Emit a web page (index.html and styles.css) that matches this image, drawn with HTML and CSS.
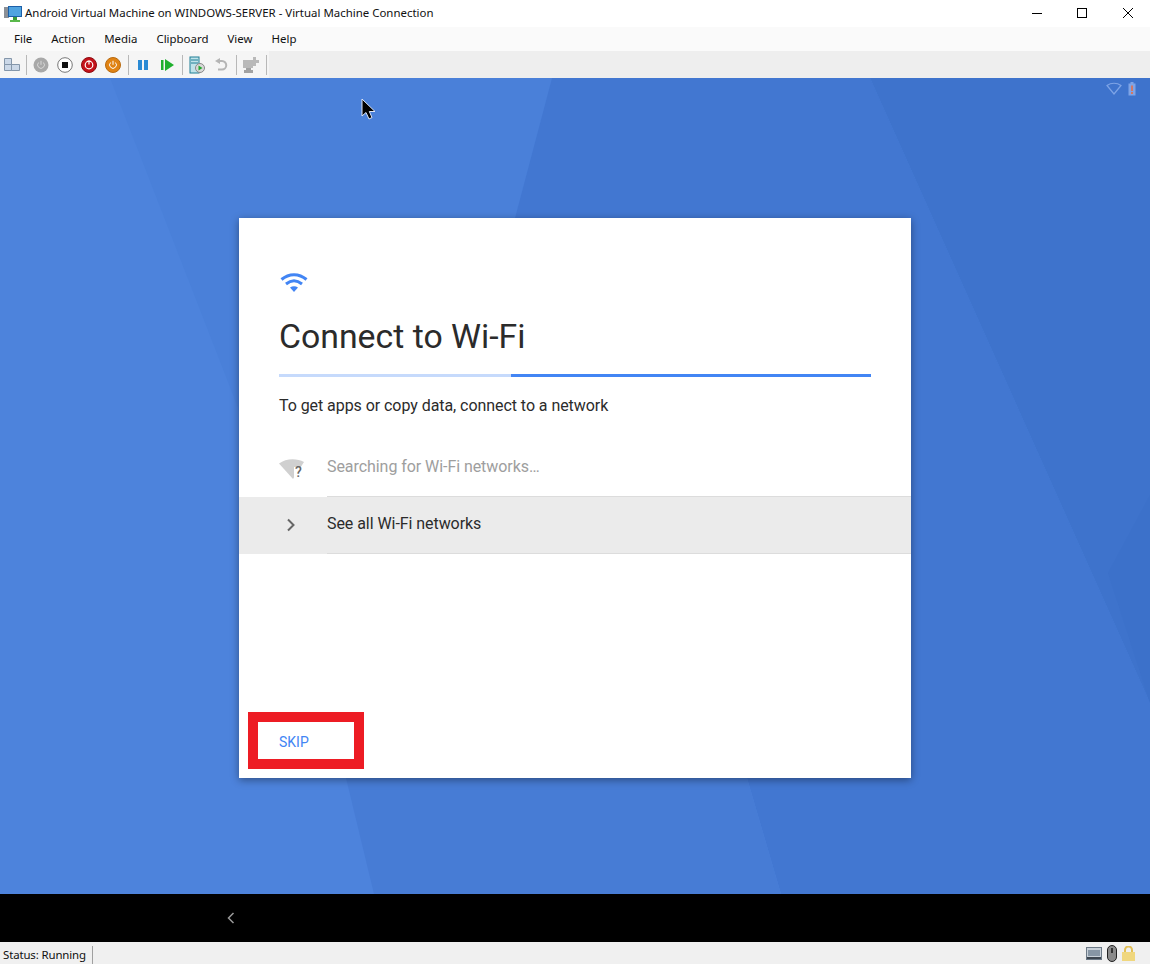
FILE: index.html
```html
<!DOCTYPE html>
<html lang="en">
<head>
<meta charset="utf-8">
<title>Android Virtual Machine on WINDOWS-SERVER - Virtual Machine Connection</title>
<link rel="stylesheet" href="styles.css">
</head>
<body>
<div class="window">
  <header class="titlebar">
    <svg class="app-icon" width="18" height="18" viewBox="0 0 18 18">
      <rect x="0" y="2" width="5" height="11" fill="#8a8f96"/>
      <rect x="4" y="1" width="14" height="11" fill="#1c5fa8"/>
      <rect x="5" y="2" width="12" height="9" fill="#4fa3e0"/>
      <rect x="9" y="12" width="4" height="3" fill="#3a9a3a"/>
      <rect x="6" y="15" width="10" height="2" fill="#59b84a"/>
    </svg>
    <span class="title">Android Virtual Machine on WINDOWS-SERVER - Virtual Machine Connection</span>
    <div class="win-controls">
      <svg width="46" height="27" viewBox="0 0 46 27"><path d="M20 13.500h10" stroke="#000" fill="none"/></svg>
      <svg width="46" height="27" viewBox="0 0 46 27"><rect x="19.500" y="8.500" width="9" height="9" stroke="#000" fill="none"/></svg>
      <svg width="46" height="27" viewBox="0 0 46 27"><path d="M19 8l10 10M29 8l-10 10" stroke="#000" fill="none"/></svg>
    </div>
  </header>
  <nav class="menubar">
    <span>File</span><span>Action</span><span>Media</span><span>Clipboard</span><span>View</span><span>Help</span>
  </nav>
  <div class="toolbar">
    <div class="tools">
      <span class="tool tool-first"><svg width="16" height="13" viewBox="0 0 16 13"><path d="M.5 .5h7v6h-7zM.5 6.500h7v6h-7zM7.500 6.500h8v6h-8z" fill="#cbd8e8" stroke="#8496aa"/></svg></span>
      <i class="sep"></i>
      <span class="tool"><svg width="16" height="16" viewBox="0 0 16 16"><circle cx="8" cy="8" r="7.500" fill="#a8a8a8"/><path d="M5.600 5.500a3.400 3.400 0 1 0 4.800 0M8 3.800v4" stroke="#d8d8d8" fill="none"/></svg></span>
      <span class="tool"><svg width="16" height="16" viewBox="0 0 16 16"><circle cx="8" cy="8" r="7.300" fill="#fff" stroke="#777"/><rect x="5" y="5" width="6" height="6" fill="#111"/></svg></span>
      <span class="tool"><svg width="16" height="16" viewBox="0 0 16 16"><circle cx="8" cy="8" r="7.500" fill="#c4121a" stroke="#8e0d12"/><circle cx="8" cy="8" r="3.800" fill="none" stroke="#fff" stroke-width="1.200"/><path d="M8 3.500v4" stroke="#fff" stroke-width="1.200"/></svg></span>
      <span class="tool"><svg width="16" height="16" viewBox="0 0 16 16"><circle cx="8" cy="8" r="7.500" fill="#e08314" stroke="#b86a10"/><path d="M5.600 5.500a3.400 3.400 0 1 0 4.800 0M8 3.800v4" stroke="#fff" fill="none"/></svg></span>
      <i class="sep"></i>
      <span class="tool"><svg width="12" height="12" viewBox="0 0 12 12"><path d="M1 1h4v10H1zM7 1h4v10H7z" fill="#2a8ad4"/></svg></span>
      <span class="tool"><svg width="14" height="12" viewBox="0 0 14 12"><path d="M1 1h2.500v10H1zM5 0l9 6-9 6z" fill="#1fb02d"/></svg></span>
      <i class="sep"></i>
      <span class="tool"><svg width="16" height="18" viewBox="0 0 16 18"><rect x="1" y="1" width="9" height="16" fill="#bfe3ea" stroke="#1f7f95"/><path d="M2 4h7M2 7h7" stroke="#1f7f95"/><circle cx="11" cy="12" r="4.500" fill="#d9d9d9" stroke="#888"/><path d="M9.500 9.500l4 2.500-4 2.500z" fill="#22a82e"/></svg></span>
      <span class="tool"><svg width="14" height="14" viewBox="0 0 14 14"><path d="M5 3h3a4 4 0 0 1 0 8.500H4" fill="none" stroke="#b5b5b5" stroke-width="2"/><path d="M6 0v6L1 3z" fill="#b5b5b5"/></svg></span>
      <i class="sep"></i>
      <span class="tool"><svg width="18" height="18" viewBox="0 0 18 18"><path d="M1 4h10v8H1zM11 1h3v3h3v3h-3v3h-3z" fill="#b9b9b9"/><path d="M4 12h5v2H4zM2 14h9v3H2z" fill="#a2a2a2"/></svg></span>
      <i class="sep"></i>
    </div>
  </div>
  <main class="desktop">
    <svg class="wallpaper" viewBox="0 0 1150 816" preserveAspectRatio="none">
      <rect width="1150" height="816" fill="#4d83dc"/>
      <path d="M110 0H552L515 140V500H240V335Z" fill="#4a80d9"/>
      <path d="M552 0H870L1150 625V816H781L747 700H346V140H515Z" fill="#4277d1"/>
      <path d="M346 700L374 816H781L747 700Z" fill="#477cd5"/>
      <path d="M870 0H1150V625Z" fill="#3e73cc"/>
      <path d="M1150 417L1108 495L1150 625Z" fill="#3c71ca"/>
    </svg>
    <svg class="cursor" width="16" height="24" viewBox="0 0 16 24"><path d="M1 1V18L5 14.500L8 21L11 19.500L8.300 13.500H14Z" fill="#000" stroke="#dfe6f5"/></svg>
    <div class="status-icons">
      <svg width="16" height="13" viewBox="0 0 16 13"><path d="M1 3.500C5 .5 11 .5 15 3.500L8 12Z" fill="none" stroke="#7ea4e6" stroke-width="1.200"/></svg>
      <svg width="8" height="14" viewBox="0 0 8 14"><rect x="2.500" y="0" width="3" height="2" fill="#7ea4e6"/><rect x="0.500" y="1.500" width="7" height="12" fill="#7ea4e6"/><path d="M4 3.500v5.500M4 10v2" stroke="#f0683a" stroke-width="1.500"/></svg>
    </div>
    <section class="card">
      <div class="card-head">
        <svg class="wifi" width="28" height="20" viewBox="0 0 28 20"><path d="M1.500 7.500C9 1 19 1 26.500 7.500M6 12C11 8 17 8 22 12" fill="none" stroke="#4285f4" stroke-width="3"/><path d="M10 15.500C12.500 13.800 15.500 13.800 18 15.500L14 20Z" fill="#4285f4"/></svg>
        <h1>Connect to Wi-Fi</h1>
        <div class="progress"><i class="progress-fill"></i></div>
        <p>To get apps or copy data, connect to a network</p>
      </div>
      <div class="row row-search">
        <span class="row-icon"><svg width="26" height="22" viewBox="0 0 26 22"><path d="M0 5.500C7 0 18 0 25 4L14 21Z" fill="#d0d0d0"/><rect x="15" y="9" width="11" height="13" fill="#fff"/></svg><b class="q">?</b></span>
        <span class="row-text muted">Searching for Wi-Fi networks…</span>
      </div>
      <div class="row row-active">
        <span class="row-icon"><svg width="10" height="14" viewBox="0 0 10 14"><path d="M2 1.500L7.500 7L2 12.500" fill="none" stroke="#666" stroke-width="2"/></svg></span>
        <span class="row-text">See all Wi-Fi networks</span>
      </div>
      <div class="card-foot"><button class="skip">SKIP</button></div>
    </section>
  </main>
  <div class="navbar"><svg width="8" height="12" viewBox="0 0 8 12"><path d="M6.500 1L1.500 6L6.500 11" fill="none" stroke="#9a9a9a" stroke-width="1.500"/></svg></div>
  <footer class="statusbar">
    <span class="status-text">Status: Running</span>
    <div class="tray">
      <svg width="16" height="13" viewBox="0 0 16 13"><rect x=".5" y=".5" width="15" height="12" fill="#c8d0d8" stroke="#6c7986"/><rect x="2" y="3" width="12" height="6" fill="#8796a5"/><rect x="1" y="10" width="14" height="2" fill="#3d4650"/></svg>
      <svg width="10" height="17" viewBox="0 0 10 17"><rect x=".5" y=".5" width="9" height="16" rx="4.500" fill="#8a8a8a" stroke="#222"/><rect x="4" y="3" width="2" height="5" fill="#333"/></svg>
      <svg width="13" height="15" viewBox="0 0 13 15"><path d="M3 7V4a3.500 3.500 0 0 1 7 0v3" fill="none" stroke="#e2bf55" stroke-width="2"/><rect y="6" width="13" height="9" fill="#f0d77e"/></svg>
    </div>
  </footer>
</div>
</body>
</html>
```
FILE: styles.css
```css
* { box-sizing: border-box; }
html, body { margin: 0; height: 100%; overflow: hidden; }
body { font-family: "Noto Sans", "Liberation Sans", sans-serif; font-size: 11.45px; color: #111; background: #fff; }
.window { display: flex; flex-direction: column; width: 1150px; height: 964px; }

.titlebar { height: 27px; display: flex; align-items: center; background: #fff; padding-left: 4px; }
.app-icon { margin-right: 3px; }
.title { flex: 1; white-space: nowrap; margin-top: -2px; }
.win-controls { display: flex; }
.win-controls svg { display: block; }

.menubar { height: 24px; display: flex; align-items: center; gap: 19px; padding: 0 0 2px 14px; background: #fafafa; }

.toolbar { height: 27px; background: #eeeeee; display: flex; }
.tools { display: flex; align-items: center; background: #f5f5f5; }
.tool { width: 24px; height: 27px; display: flex; align-items: center; justify-content: center; }
.tool-first { width: 23px; }
.sep { width: 1px; height: 20px; background: #b8b8b8; margin: 0 2px 0 3px; }

.desktop { position: relative; height: 816px; overflow: hidden; padding-top: 140px; display: flex; justify-content: center; align-items: flex-start; }
.wallpaper { position: absolute; inset: 0; width: 100%; height: 100%; }
.cursor { position: absolute; left: 361px; top: 20px; }
.status-icons { position: absolute; top: 4px; right: 14px; display: flex; gap: 6px; }

.card { position: relative; width: 672px; height: 560px; background: #fff; box-shadow: 0 2px 8px rgba(0,0,0,.4); display: flex; flex-direction: column; font-family: Roboto, sans-serif; color: #2b2b2b; }
.card-head { padding: 54px 40px 0; }
.wifi { display: block; margin-left: 1px; }
h1 { margin: 24px 0 0; font-size: 33.8px; line-height: 42px; font-weight: 400; }
.progress { height: 3px; margin-top: 16px; background: #c6dafc; display: flex; justify-content: flex-end; }
.progress-fill { width: 360px; background: #4285f4; }
p { margin: 19px 0 0; font-size: 16px; line-height: 20px; letter-spacing: -.06px; }

.row { display: flex; align-items: stretch; height: 57px; font-size: 16px; letter-spacing: -.06px; }
.row-search { margin-top: 24px; }
.row-icon { position: relative; width: 88px; flex: none; display: flex; align-items: center; padding-left: 40px; }
.row-active .row-icon { padding-left: 47px; padding-bottom: 1px; }
.row-text { flex: 1; display: flex; align-items: center; padding-bottom: 3px; border-bottom: 1px solid #dcdcdc; }
.muted { color: #9e9e9e; }
.row-active { background: #ebebeb; }
.q { position: absolute; left: 56px; top: 24px; font-size: 14px; font-weight: 500; color: #666; }

.card-foot { margin-top: auto; padding: 0 0 9px 9px; }
.skip { display: block; width: 116px; height: 57px; padding: 3px 0 0 21px; border: 10px solid #ed1c24; background: #fff; color: #4285f4; font: 400 14px Roboto, sans-serif; text-align: left; }

.navbar { height: 48px; background: #000; display: flex; align-items: center; padding-left: 227px; }
.statusbar { height: 22px; background: #f0f0f0; display: flex; align-items: center; padding: 4px 15px 0 3px; }
.status-text { padding-right: 6px; border-right: 1px solid #a0a0a0; line-height: 18px; letter-spacing: -.13px; }
.tray { margin-left: auto; margin-top: -3px; display: flex; align-items: center; gap: 5px; }
```
